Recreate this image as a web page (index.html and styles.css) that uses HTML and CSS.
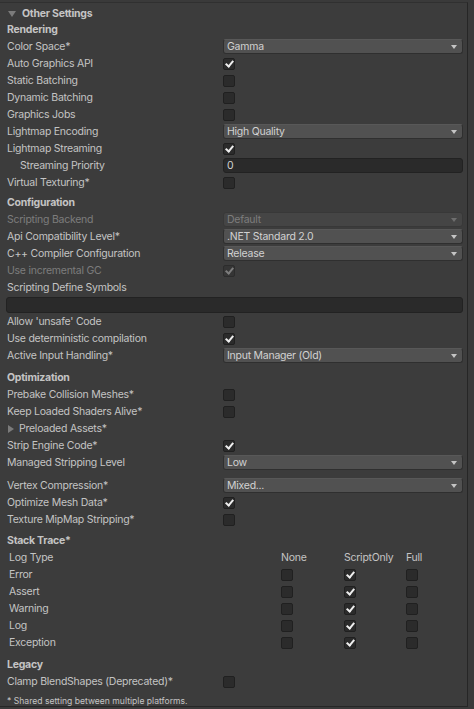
FILE: index.html
```html
<!DOCTYPE html>
<html lang="en">
<head>
  <meta charset="UTF-8">
  <title>Other Settings</title>
  <link rel="stylesheet" href="styles.css">
</head>
<body>

  <div class="inspector">
    <div class="foldout"><span class="tri-down"></span>Other Settings</div>

    <div class="section first">Rendering</div>
    <div class="row"><span class="label">Color Space*</span><div class="popup">Gamma<i class="caret"></i></div></div>
    <div class="row"><span class="label">Auto Graphics API</span><span class="toggle on"></span></div>
    <div class="row"><span class="label">Static Batching</span><span class="toggle"></span></div>
    <div class="row"><span class="label">Dynamic Batching</span><span class="toggle"></span></div>
    <div class="row"><span class="label">Graphics Jobs</span><span class="toggle"></span></div>
    <div class="row"><span class="label">Lightmap Encoding</span><div class="popup">High Quality<i class="caret"></i></div></div>
    <div class="row"><span class="label">Lightmap Streaming</span><span class="toggle on"></span></div>
    <div class="row"><span class="label indent">Streaming Priority</span><div class="field">0</div></div>
    <div class="row"><span class="label">Virtual Texturing*</span><span class="toggle"></span></div>

    <div class="section">Configuration</div>
    <div class="row disabled"><span class="label">Scripting Backend</span><div class="popup">Default<i class="caret"></i></div></div>
    <div class="row"><span class="label">Api Compatibility Level*</span><div class="popup">.NET Standard 2.0<i class="caret"></i></div></div>
    <div class="row"><span class="label">C++ Compiler Configuration</span><div class="popup">Release<i class="caret"></i></div></div>
    <div class="row disabled"><span class="label">Use incremental GC</span><span class="toggle on"></span></div>
    <div class="row"><span class="label">Scripting Define Symbols</span></div>
    <div class="row"><div class="field wide"></div></div>
    <div class="row"><span class="label">Allow 'unsafe' Code</span><span class="toggle"></span></div>
    <div class="row"><span class="label">Use deterministic compilation</span><span class="toggle on"></span></div>
    <div class="row"><span class="label">Active Input Handling*</span><div class="popup">Input Manager (Old)<i class="caret"></i></div></div>

    <div class="section gap">Optimization</div>
    <div class="row"><span class="label">Prebake Collision Meshes*</span><span class="toggle"></span></div>
    <div class="row"><span class="label">Keep Loaded Shaders Alive*</span><span class="toggle"></span></div>
    <div class="row"><span class="label fold"><span class="tri-right"></span>Preloaded Assets*</span></div>
    <div class="row"><span class="label">Strip Engine Code*</span><span class="toggle on"></span></div>
    <div class="row"><span class="label">Managed Stripping Level</span><div class="popup">Low<i class="caret"></i></div></div>
    <div class="row spaced"><span class="label">Vertex Compression*</span><div class="popup">Mixed...<i class="caret"></i></div></div>
    <div class="row"><span class="label">Optimize Mesh Data*</span><span class="toggle on"></span></div>
    <div class="row"><span class="label">Texture MipMap Stripping*</span><span class="toggle"></span></div>

    <div class="section trace-head">Stack Trace*</div>
    <div class="trace">
      <span class="head">Log Type</span><span class="head">None</span><span class="head">ScriptOnly</span><span class="head">Full</span>
      <span>Error</span><span class="toggle"></span><span class="toggle on"></span><span class="toggle"></span>
      <span>Assert</span><span class="toggle"></span><span class="toggle on"></span><span class="toggle"></span>
      <span>Warning</span><span class="toggle"></span><span class="toggle on"></span><span class="toggle"></span>
      <span>Log</span><span class="toggle"></span><span class="toggle on"></span><span class="toggle"></span>
      <span>Exception</span><span class="toggle"></span><span class="toggle on"></span><span class="toggle"></span>
    </div>

    <div class="section gap">Legacy</div>
    <div class="row"><span class="label">Clamp BlendShapes (Deprecated)*</span><span class="toggle"></span></div>

    <div class="note">* Shared setting between multiple platforms.</div>
  </div>

</body>
</html>
```

FILE: styles.css
```css
body {
  margin: 0;
  background: #3a3a3a;
  font-family: Inter, "Noto Sans", sans-serif;
  font-size: 10.5px;
  letter-spacing: -0.25px;
  color: #c4c4c4;
}
.inspector {
  width: 456px;
  height: 703px;
  padding: 0 4px 0 7px;
  border-top: 1px solid #303030;
  border-right: 1px solid #262626;
  border-bottom: 1px solid #262626;
  margin-top: 2px;
  background: #3c3c3c;
  overflow: hidden;
}
.foldout {
  display: flex;
  align-items: center;
  height: 17px;
  margin-top: 2px;
  font-weight: 700;
}
.tri-down {
  width: 0;
  height: 0;
  border-left: 4px solid transparent;
  border-right: 4px solid transparent;
  border-top: 6px solid #7b7b7b;
  margin: 0 6px 0 1px;
}
.tri-right {
  width: 0;
  height: 0;
  border-top: 4px solid transparent;
  border-bottom: 4px solid transparent;
  border-left: 6px solid #7b7b7b;
  margin: 0 5px 0 1px;
}
.section {
  height: 16px;
  line-height: 16px;
  font-weight: 700;
  margin-top: 4px;
}
.section.first {
  margin-top: 0;
}
.section.gap {
  margin-top: 6px;
}
.section.trace-head {
  margin-top: 5px;
}
.row {
  display: flex;
  align-items: center;
  height: 17px;
}
.row.spaced {
  margin-top: 6px;
}
.label {
  width: 216px;
  flex: none;
  white-space: nowrap;
}
.label.indent {
  padding-left: 13px;
  box-sizing: border-box;
}
.label.fold {
  display: flex;
  align-items: center;
}
.disabled {
  color: #7d7d7d;
}
.popup {
  flex: 1;
  position: relative;
  height: 13px;
  line-height: 13px;
  padding: 0 3px;
  background: #515151;
  border: 1px solid #2f2f2f;
  border-top-color: #585858;
  border-radius: 3px;
  color: #d2d2d2;
}
.disabled .popup {
  background: #454545;
  border-color: #383838;
  color: #7d7d7d;
}
.caret {
  position: absolute;
  right: 5px;
  top: 5px;
  width: 0;
  height: 0;
  border-left: 3px solid transparent;
  border-right: 3px solid transparent;
  border-top: 4px solid #c4c4c4;
}
.disabled .caret {
  border-top-color: #6e6e6e;
}
.field {
  flex: 1;
  height: 13px;
  line-height: 13px;
  padding: 0 3px;
  background: #2a2a2a;
  border: 1px solid #222;
  border-radius: 3px;
  color: #d2d2d2;
}
.field.wide {
  margin-left: -1px;
  height: 14px;
}
.toggle {
  position: relative;
  width: 10px;
  height: 10px;
  flex: none;
  background: #2b2b2b;
  border: 1px solid #202020;
  border-radius: 2px;
}
.toggle.on::after {
  content: "";
  position: absolute;
  left: 3px;
  top: 0;
  width: 3px;
  height: 6px;
  border: solid #eeeeee;
  border-width: 0 2px 2px 0;
  transform: rotate(40deg);
}
.disabled .toggle {
  background: #353535;
  border-color: #2c2c2c;
}
.disabled .toggle.on::after {
  border-color: #7d7d7d;
}
.trace {
  display: grid;
  grid-template-columns: 272px 63px 62px 1fr;
  grid-auto-rows: 17px;
  align-items: center;
  padding-left: 2px;
}
.trace .head {
  height: 16px;
  line-height: 16px;
}
.note {
  margin-top: 4px;
  font-size: 8.6px;
  letter-spacing: 0;
  line-height: 15px;
}
```
